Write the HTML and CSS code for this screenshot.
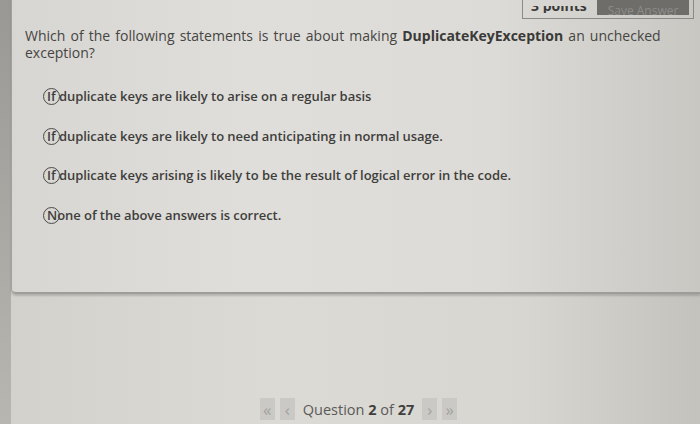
FILE: index.html
```html
<!DOCTYPE html>
<html>
<head>
<meta charset="utf-8">
<link rel="stylesheet" href="styles.css">
</head>
<body>
<div class="page">
  <div class="edge"></div>
  <div class="main">
    <div class="card">
      <div class="card-head">
        <div class="points">
          <span class="points-label">3 points</span>
          <span class="save">Save Answer</span>
        </div>
      </div>
      <p class="question">Which of the following statements is true about making <b>DuplicateKeyException</b> an unchecked exception?</p>
      <ul class="options">
        <li class="option">If duplicate keys are likely to arise on a regular basis</li>
        <li class="option">If duplicate keys are likely to need anticipating in normal usage.</li>
        <li class="option">If duplicate keys arising is likely to be the result of logical error in the code.</li>
        <li class="option">None of the above answers is correct.</li>
      </ul>
    </div>
    <div class="nav">
      <span class="navbtn">&laquo;</span>
      <span class="navbtn">&lsaquo;</span>
      <span class="navtext">Question <b>2</b> of <b>27</b></span>
      <span class="navbtn">&rsaquo;</span>
      <span class="navbtn">&raquo;</span>
    </div>
  </div>
</div>
</body>
</html>
```

FILE: styles.css
```css
html, body {
  margin: 0;
  padding: 0;
}
body {
  width: 700px;
  height: 424px;
  overflow: hidden;
  font-family: "Open Sans", "Liberation Sans", sans-serif;
  color: #3c3c3a;
  background: #d6d4cf;
}
.page {
  display: flex;
  height: 424px;
  background: linear-gradient(to right, #d3d1cc 0%, #dcdad5 40%, #d8d6d1 75%, #c4c2bd 100%);
}
.edge {
  width: 11px;
  flex: none;
  background: linear-gradient(to bottom, #9a9894 0%, #a9a7a2 50%, #b8b6b1 100%);
}
.main {
  flex: 1;
  display: flex;
  flex-direction: column;
}
.card {
  height: 294px;
  box-sizing: border-box;
  border-left: 1px solid #a3a19c;
  border-bottom: 2px solid #9f9d98;
  border-bottom-left-radius: 5px;
  background: linear-gradient(to right, #d8d6d2 0%, #e0deda 35%, #dddbd7 70%, #c9c7c2 100%);
  box-shadow: 0 2px 2px rgba(80, 78, 74, 0.25);
  padding: 0 0 0 13px;
}
.card-head {
  display: flex;
  justify-content: flex-end;
  height: 20px;
  padding-right: 6px;
}
.points {
  display: flex;
  align-items: flex-end;
  height: 19px;
  box-sizing: border-box;
  border: 1px solid #8c8a86;
  border-top: none;
  padding: 0 4px 3px 8px;
  gap: 8px;
}
.points-label {
  font-size: 14px;
  font-weight: 700;
  color: #3a3a3a;
  line-height: 14px;
  width: 58px;
  overflow: hidden;
  height: 7px;
  margin-bottom: 2px;
  display: flex;
  align-items: flex-end;
}
.save {
  align-self: flex-start;
  background: #6e6d6a;
  color: #8d8c89;
  font-size: 12px;
  height: 15px;
  line-height: 9px;
  width: 92px;
  text-align: center;
  overflow: hidden;
  display: flex;
  align-items: flex-end;
  justify-content: center;
}
.question {
  margin: 7px 0 0 0;
  font-size: 14px;
  line-height: 17px;
  word-spacing: 1.5px;
  color: #454543;
  width: 660px;
}
.question b {
  font-weight: 700;
  color: #3a3a38;
}
.options {
  list-style: none;
  margin: 26px 0 0 0;
  padding: 0 0 0 22px;
  display: flex;
  flex-direction: column;
  gap: 21px;
}
.option {
  position: relative;
  font-size: 13px;
  font-weight: 600;
  line-height: 18.5px;
  color: #3e3e3c;
  letter-spacing: -0.05px;
}
.option::before {
  content: "";
  position: absolute;
  left: -4px;
  top: 1px;
  width: 15px;
  height: 15px;
  border: 1.5px solid #4a4a48;
  border-radius: 50%;
}
.nav {
  display: flex;
  align-items: center;
  justify-content: center;
  gap: 5px;
  margin-top: 104px;
  padding-left: 6px;
}
.navbtn {
  display: flex;
  align-items: center;
  justify-content: center;
  width: 15px;
  height: 22px;
  background: #cac9c5;
  color: #a3a2a0;
  font-size: 17px;
}
.navtext {
  font-size: 14.5px;
  color: #5a5a58;
  padding: 0 3px;
}
.navtext b {
  color: #3f3f3d;
  font-weight: 700;
}
```
